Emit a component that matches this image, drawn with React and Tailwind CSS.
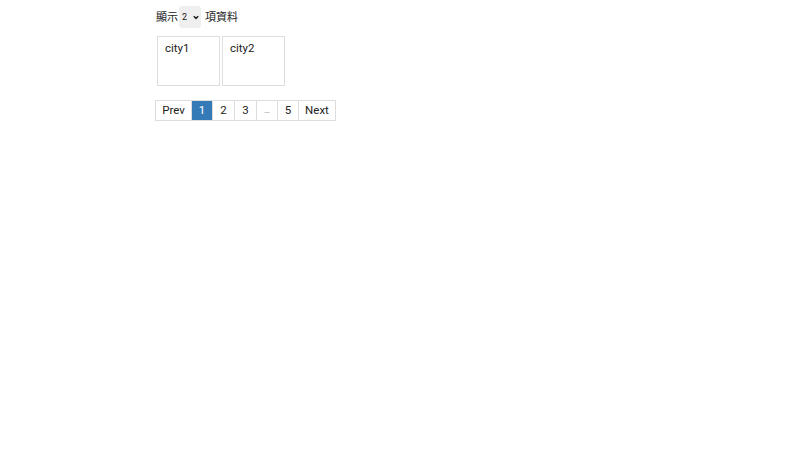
export default function App() {
  const pages = ["Prev", "1", "2", "3", "...", "5", "Next"];
  const widths = ["w-[37px] border-l", "w-[21px]", "w-[22px]", "w-[22px]", "w-[21px]", "w-[21px]", "w-[37px]"];
  return (
    <div className="w-[800px] h-[450px] bg-white text-[#222] text-[11.5px]" style={{ fontFamily: "Roboto, 'Noto Sans CJK TC', sans-serif" }}>
      <div className="pl-[156px] pt-[6px]">
        <div className="flex items-center h-[22px]">
          <span className="text-[11px] mt-[3px]">顯示</span>
          <div className="ml-[1px] w-[22px] h-[22px] bg-[#efefef] rounded-[3px] flex items-center justify-between pl-[3px] pr-[2px]">
            <span className="text-[9px] mt-[1px]">2</span>
            <svg width="6" height="5" viewBox="0 0 6 5"><path d="M0.8 1.2 L3 3.4 L5.2 1.2" stroke="#222" strokeWidth="1.5" fill="none" /></svg>
          </div>
          <span className="ml-[4px] text-[11px] mt-[3px]">項資料</span>
        </div>
        <div className="flex gap-[2px] mt-[8px] ml-[1px]">
          {["city1", "city2"].map((c) => (
            <div key={c} className="w-[63px] h-[50px] border border-[#ddd] pl-[7px] pt-[3px]">{c}</div>
          ))}
        </div>
        <div className="flex mt-[14px] -ml-[1px]">
          {pages.map((p, i) => (
            <div
              key={i}
              className={`${widths[i]} h-[21px] flex items-center justify-center border-y border-r border-[#ddd] ${p === "1" ? "bg-[#337ab7] border-[#337ab7] text-white" : "bg-white"} ${p === "..." ? "text-[8px] text-[#777]" : ""}`}
            >
              {p === "..." ? "…" : p}
            </div>
          ))}
        </div>
      </div>
    </div>
  );
}
